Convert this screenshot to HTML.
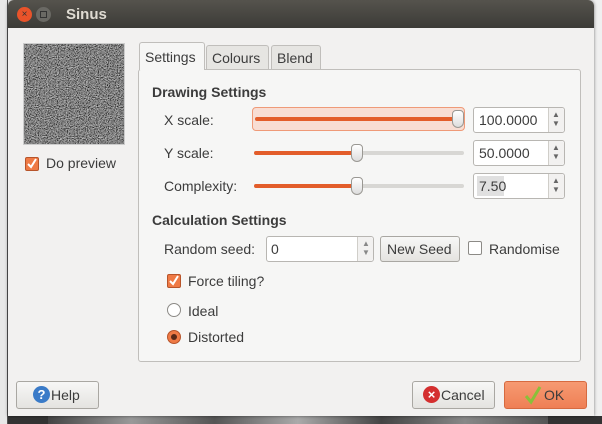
<!DOCTYPE html>
<html><head><meta charset="utf-8"><style>
*{box-sizing:border-box;margin:0;padding:0}
body{width:602px;height:424px;overflow:hidden;background:#f0f0f0;position:relative;font-family:"Liberation Sans","DejaVu Sans",sans-serif;font-size:14px;color:#3c3c3c}
.a{position:absolute}
.win{left:8px;top:0;width:586px;height:416px;background:#f2f1f0;border-radius:6px 6px 0 0;box-shadow:0 0 3px rgba(0,0,0,.5)}
.title{left:8px;top:0;width:586px;height:28px;background:linear-gradient(#55534d,#3c3b37);border-radius:6px 6px 0 0}
.t{font-size:14px;white-space:nowrap}
.box{background:#fff;border:1px solid #b8b6b2;border-radius:3px}
.spin{border-left:1px solid #d0cec9;background:#f2f1f0;border-radius:0 3px 3px 0}
.trough{height:4px;background:#d8d7d4;border-radius:2px}
.fill{height:4px;background:#e35d2a;border-radius:2px}
.knob{width:12px;height:18px;background:linear-gradient(#fff,#ddd);border:1px solid #9a9893;border-radius:4px 4px 6px 6px}
.btn{border:1px solid #a9a7a2;border-radius:3px;background:linear-gradient(#f7f7f6,#e4e3e0)}
.cb{width:14px;height:14px;border-radius:2px}
.on{background:#ef7a45;border:1px solid #b7542a}
.off{background:#fff;border:1px solid #8c8a86}
</style></head><body>
<div class="a" style="left:0;top:0;width:8px;height:424px;background:#e8e8e8;border-right:1px solid #555"></div>
<div class="a" style="left:8px;top:416px;width:594px;height:8px;background:#333"></div>
<div class="a" style="left:48px;top:416px;width:500px;height:8px;background:linear-gradient(90deg,#444,#999,#555,#aaa,#444,#888,#555)"></div>
<div class="a win"></div>
<div class="a title"></div>
<div class="a" style="left:17px;top:7px;width:15px;height:15px;border-radius:50%;background:#e9532a;color:#333;font-size:10px;text-align:center;line-height:15px">×</div>
<div class="a" style="left:36px;top:7px;width:15px;height:15px;border-radius:50%;background:#6a6964"><div class="a" style="left:4px;top:4px;width:7px;height:7px;border:1px solid #333"></div></div>
<div class="a t" style="left:66px;top:6px;color:#dfdbd2;font-weight:bold;font-size:15px">Sinus</div>

<svg class="a" style="left:23px;top:43px" width="102" height="102"><filter id="n"><feTurbulence type="fractalNoise" baseFrequency="0.9" numOctaves="1"/><feColorMatrix type="saturate" values="0"/><feComponentTransfer><feFuncR type="linear" slope="4" intercept="-1.55"/><feFuncG type="linear" slope="4" intercept="-1.55"/><feFuncB type="linear" slope="4" intercept="-1.55"/></feComponentTransfer></filter><rect width="102" height="102" fill="#555"/><rect x="1" y="1" width="100" height="100" filter="url(#n)"/><rect x=".5" y=".5" width="101" height="101" fill="none" stroke="#ccc"/></svg>
<div class="a cb on" style="left:25px;top:157px"></div>
<svg class="a" style="left:25px;top:157px" width="14" height="14"><path d="M3 7l3 3 5-8" stroke="#fff" stroke-width="2" fill="none"/></svg>
<div class="a t" style="left:46px;top:155px">Do preview</div>

<div class="a" style="left:138px;top:69px;width:443px;height:293px;border:1px solid #c0bebb;border-radius:3px;background:#f6f6f5"></div>
<div class="a" style="left:139px;top:42px;width:66px;height:28px;border:1px solid #c0bebb;border-bottom:none;border-radius:3px 3px 0 0;background:#f6f6f5"></div>
<div class="a t" style="left:145px;top:49px">Settings</div>
<div class="a" style="left:206px;top:45px;width:63px;height:24px;border:1px solid #c0bebb;border-bottom:none;border-radius:3px 3px 0 0;background:#e6e5e2"></div>
<div class="a t" style="left:212px;top:50px">Colours</div>
<div class="a" style="left:271px;top:45px;width:50px;height:24px;border:1px solid #c0bebb;border-bottom:none;border-radius:3px 3px 0 0;background:#e6e5e2"></div>
<div class="a t" style="left:277px;top:50px">Blend</div>

<div class="a t" style="left:152px;top:84px;font-weight:bold">Drawing Settings</div>
<div class="a t" style="left:164px;top:112px">X scale:</div>
<div class="a t" style="left:164px;top:145px">Y scale:</div>
<div class="a t" style="left:164px;top:178px">Complexity:</div>
<div class="a" style="left:252px;top:107px;width:213px;height:24px;background:#f8ddd3;border:1px solid #ef9a78;border-radius:4px"></div>
<div class="a fill" style="left:255px;top:117px;width:200px"></div>
<div class="a knob" style="left:452px;top:110px"></div>
<div class="a trough" style="left:254px;top:151px;width:210px"></div>
<div class="a fill" style="left:254px;top:151px;width:104px"></div>
<div class="a knob" style="left:351px;top:144px"></div>
<div class="a trough" style="left:254px;top:184px;width:210px"></div>
<div class="a fill" style="left:254px;top:184px;width:104px"></div>
<div class="a knob" style="left:351px;top:177px"></div>

<div class="a box" style="left:473px;top:107px;width:92px;height:26px"><div class="a spin" style="right:0;top:0;width:16px;height:24px"></div></div>
<div class="a t" style="left:479px;top:112px">100.0000</div>
<div class="a box" style="left:473px;top:140px;width:92px;height:26px"><div class="a spin" style="right:0;top:0;width:16px;height:24px"></div></div>
<div class="a t" style="left:479px;top:145px">50.0000</div>
<div class="a box" style="left:473px;top:173px;width:92px;height:26px"><div class="a spin" style="right:0;top:0;width:16px;height:24px"></div></div>
<div class="a" style="left:477px;top:176px;width:27px;height:20px;background:#e0e0e0"></div>
<div class="a t" style="left:479px;top:178px">7.50</div>
<div class="a" style="left:552px;top:110px;font-size:8px;color:#666;line-height:9px">▲<br>▼</div>
<div class="a" style="left:552px;top:143px;font-size:8px;color:#666;line-height:9px">▲<br>▼</div>
<div class="a" style="left:552px;top:176px;font-size:8px;color:#666;line-height:9px">▲<br>▼</div>

<div class="a t" style="left:152px;top:212px;font-weight:bold">Calculation Settings</div>
<div class="a t" style="left:164px;top:241px">Random seed:</div>
<div class="a box" style="left:266px;top:236px;width:108px;height:26px"><div class="a spin" style="right:0;top:0;width:16px;height:24px"></div></div>
<div class="a t" style="left:271px;top:241px">0</div>
<div class="a" style="left:362px;top:239px;font-size:8px;color:#888;line-height:9px">▲<br>▼</div>
<div class="a btn" style="left:380px;top:236px;width:80px;height:26px"></div>
<div class="a t" style="left:387px;top:241px">New Seed</div>
<div class="a cb off" style="left:468px;top:241px"></div>
<div class="a t" style="left:489px;top:241px">Randomise</div>
<div class="a cb on" style="left:167px;top:274px"></div>
<svg class="a" style="left:167px;top:274px" width="14" height="14"><path d="M3 7l3 3 5-8" stroke="#fff" stroke-width="2" fill="none"/></svg>
<div class="a t" style="left:188px;top:273px">Force tiling?</div>
<div class="a" style="left:167px;top:303px;width:14px;height:14px;border-radius:50%;border:1px solid #8c8a86;background:#fff"></div>
<div class="a t" style="left:188px;top:303px">Ideal</div>
<div class="a" style="left:167px;top:330px;width:14px;height:14px;border-radius:50%;border:1px solid #b7542a;background:#ef7a45"><div class="a" style="left:3px;top:3px;width:6px;height:6px;border-radius:50%;background:#5a2a18"></div></div>
<div class="a t" style="left:188px;top:329px">Distorted</div>

<div class="a btn" style="left:16px;top:381px;width:83px;height:28px"></div>
<div class="a" style="left:33px;top:386px;width:17px;height:17px;border-radius:50%;background:#3a7bc8;color:#fff;font-weight:bold;font-size:13px;text-align:center;line-height:17px">?</div>
<div class="a t" style="left:51px;top:387px">Help</div>
<div class="a btn" style="left:412px;top:381px;width:83px;height:28px"></div>
<div class="a" style="left:423px;top:386px;width:17px;height:17px;border-radius:50%;background:#d42f2f;color:#fff;font-weight:bold;font-size:13px;text-align:center;line-height:17px">×</div>
<div class="a t" style="left:441px;top:387px">Cancel</div>
<div class="a" style="left:504px;top:381px;width:83px;height:28px;border:1px solid #d66a40;border-radius:3px;background:linear-gradient(#f69a72,#ef7f55)"></div>
<svg class="a" style="left:524px;top:385px" width="18" height="20"><path d="M2 11l5 6 9-15" stroke="#8ac03a" stroke-width="3" fill="none"/></svg>
<div class="a t" style="left:544px;top:387px">OK</div>
</body></html>
